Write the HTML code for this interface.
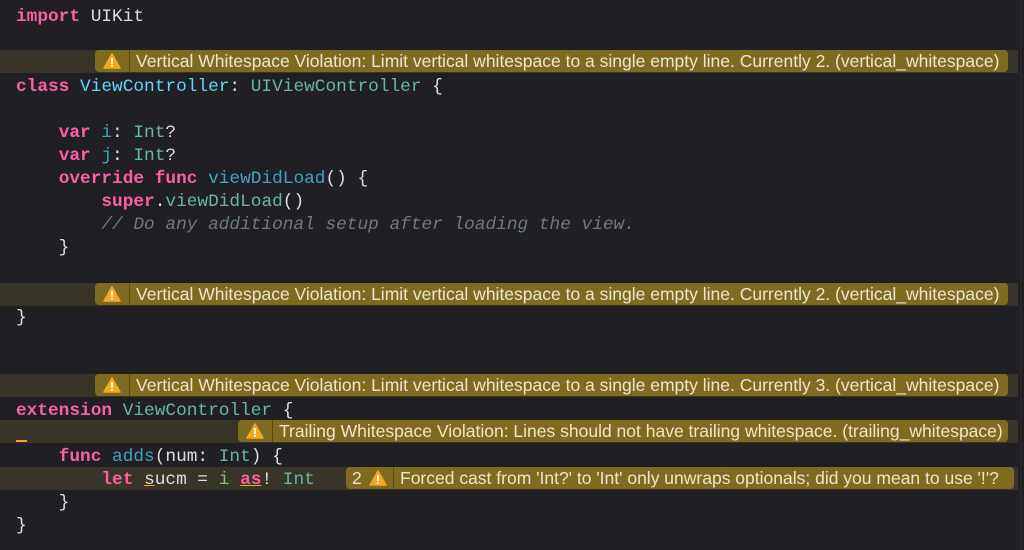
<!DOCTYPE html><html><head><style>
body{margin:0;width:1024px;height:550px;background:#1f1f24;overflow:hidden;position:relative;font-family:"Liberation Mono",monospace;}
.l{position:absolute;left:16px;height:23px;line-height:23px;font-size:17.8px;color:#dfdfe0;white-space:pre;margin-top:3px}
.band{position:absolute;left:0;width:1018px;height:23px;background:#38342a;}
.bub{position:absolute;right:10px;height:22px;background:#7f6b1f;border-radius:4px;font-family:"Liberation Sans",sans-serif;font-size:17.5px;color:#ece6cc;line-height:23px;white-space:nowrap;overflow:hidden}
.ic{display:inline-block;width:34px;height:22px;border-right:1px solid #5a4a14;vertical-align:top;position:relative}
.ic svg{position:absolute;left:8px;top:3px}
.bt{padding:0 7px 0 6px;display:inline-block}
.k{color:#fc5fa3;font-weight:bold}.t{color:#5dd8ff}.ty{color:#67b7a4}.f{color:#41a1c0}.c{color:#6c7986;font-style:italic}.g{color:#7ac46c}
.u{text-decoration:underline;text-decoration-color:#f5a623}
</style></head><body>
<div class="l" style="top:3px"><span class="k">import</span> UIKit</div>

<div class="band" style="top:50px"></div>
<div class="bub" style="top:50px;left:95px;right:16px"><span class="ic"><svg width="18" height="16" viewBox="0 0 18 16"><path d="M9 1L17 15H1Z" fill="#f5a623" stroke="#f5a623" stroke-linejoin="round" stroke-width="1.5"/><rect x="8.1" y="5" width="1.8" height="6" fill="#fff"/><rect x="8.1" y="12" width="1.8" height="1.8" fill="#fff"/></svg></span><span class="bt">Vertical Whitespace Violation: Limit vertical whitespace to a single empty line. Currently 2. (vertical_whitespace)</span></div>

<div class="l" style="top:73px"><span class="k">class</span> <span class="t">ViewController</span>: <span class="ty">UIViewController</span> {</div>
<div class="l" style="top:119px">    <span class="k">var</span> <span class="f">i</span>: <span class="ty">Int</span>?</div>
<div class="l" style="top:142px">    <span class="k">var</span> <span class="f">j</span>: <span class="ty">Int</span>?</div>
<div class="l" style="top:165px">    <span class="k">override</span> <span class="k">func</span> <span class="f">viewDidLoad</span>() {</div>
<div class="l" style="top:188px">        <span class="k">super</span>.<span class="ty">viewDidLoad</span>()</div>
<div class="l" style="top:211px">        <span class="c">// Do any additional setup after loading the view.</span></div>
<div class="l" style="top:234px">    }</div>

<div class="band" style="top:283px"></div>
<div class="bub" style="top:283px;left:95px;right:16px"><span class="ic"><svg width="18" height="16" viewBox="0 0 18 16"><path d="M9 1L17 15H1Z" fill="#f5a623" stroke="#f5a623" stroke-linejoin="round" stroke-width="1.5"/><rect x="8.1" y="5" width="1.8" height="6" fill="#fff"/><rect x="8.1" y="12" width="1.8" height="1.8" fill="#fff"/></svg></span><span class="bt">Vertical Whitespace Violation: Limit vertical whitespace to a single empty line. Currently 2. (vertical_whitespace)</span></div>
<div class="l" style="top:304px">}</div>

<div class="band" style="top:374px"></div>
<div class="bub" style="top:374px;left:95px;right:16px"><span class="ic"><svg width="18" height="16" viewBox="0 0 18 16"><path d="M9 1L17 15H1Z" fill="#f5a623" stroke="#f5a623" stroke-linejoin="round" stroke-width="1.5"/><rect x="8.1" y="5" width="1.8" height="6" fill="#fff"/><rect x="8.1" y="12" width="1.8" height="1.8" fill="#fff"/></svg></span><span class="bt">Vertical Whitespace Violation: Limit vertical whitespace to a single empty line. Currently 3. (vertical_whitespace)</span></div>
<div class="l" style="top:397px"><span class="k">extension</span> <span class="ty">ViewController</span> {</div>

<div class="band" style="top:420px"></div>
<div style="position:absolute;left:16px;top:440px;width:11px;height:2px;background:#f5a623"></div>
<div class="bub" style="top:420px;left:238px;right:16px"><span class="ic"><svg width="18" height="16" viewBox="0 0 18 16"><path d="M9 1L17 15H1Z" fill="#f5a623" stroke="#f5a623" stroke-linejoin="round" stroke-width="1.5"/><rect x="8.1" y="5" width="1.8" height="6" fill="#fff"/><rect x="8.1" y="12" width="1.8" height="1.8" fill="#fff"/></svg></span><span class="bt">Trailing Whitespace Violation: Lines should not have trailing whitespace. (trailing_whitespace)</span></div>
<div class="l" style="top:443px">    <span class="k">func</span> <span class="f">adds</span>(num: <span class="ty">Int</span>) {</div>

<div class="band" style="top:467px"></div>
<div class="l" style="top:466px">        <span class="k">let</span> <span class="u">s</span>ucm = <span class="g">i</span> <span class="k u">as</span>! <span class="ty">Int</span></div>
<div class="bub" style="top:467px;left:346px;right:10px"><span class="ic" style="width:48px;padding-left:6px;box-sizing:border-box">2<svg style="left:23px" width="18" height="16" viewBox="0 0 18 16"><path d="M9 1L17 15H1Z" fill="#f5a623" stroke="#f5a623" stroke-linejoin="round" stroke-width="1.5"/><rect x="8.1" y="5" width="1.8" height="6" fill="#fff"/><rect x="8.1" y="12" width="1.8" height="1.8" fill="#fff"/></svg></span><span class="bt">Forced cast from 'Int?' to 'Int' only unwraps optionals; did you mean to use '!'?</span></div>
<div class="l" style="top:489px">    }</div>
<div class="l" style="top:512px">}</div>
<div style="position:absolute;left:1020px;top:0;width:1px;height:550px;background:#2c2c30"></div>
</body></html>
